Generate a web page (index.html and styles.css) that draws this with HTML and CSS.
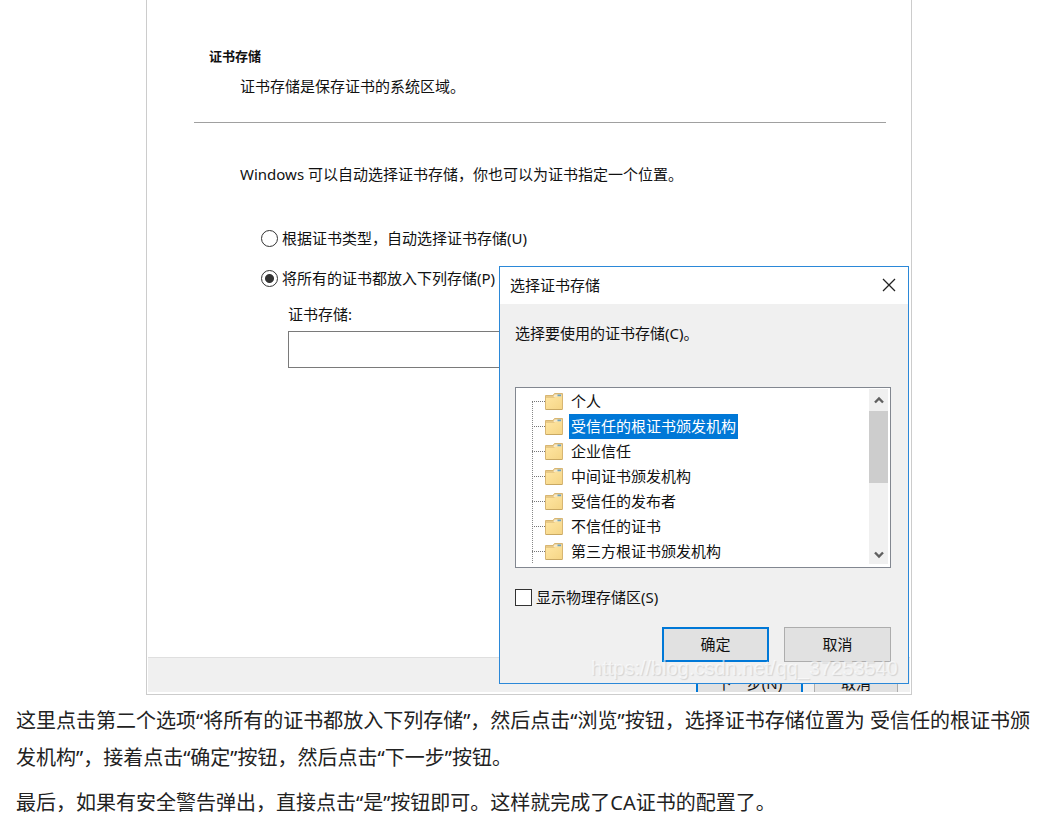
FILE: index.html
```html
<!DOCTYPE html>
<html lang="zh-CN">
<head>
    <meta charset="UTF-8">
    <meta name="viewport" content="width=device-width, initial-scale=1.0">
    <title>CA证书配置</title>
    <link rel="stylesheet" href="styles.css">
</head>
<body>
    <svg class="sprite" aria-hidden="true">
        <defs>
            <linearGradient id="folderFill" x1="0" y1="0" x2="1" y2="1">
                <stop offset="0" stop-color="#ffe6a2"/>
                <stop offset="1" stop-color="#f5d586"/>
            </linearGradient>
        </defs>
        <symbol id="folder" viewBox="0 0 18 17">
            <path d="M.5 16V2.500H8L9.500.5h8V16z" fill="#e8c987" stroke="#d8b672"/>
            <path d="M9.500 1.500h7V4h-8z" fill="#f4ead0"/>
            <path d="M12.500 1.500h3.500v2h-3.500z" fill="#6fa3bd"/>
            <path d="M1 16V5h8l1.500-1.500H17V16z" fill="url(#folderFill)"/>
            <path d="M.5 16.500h17" stroke="#c9a862"/>
        </symbol>
    </svg>

    <article class="article">
        <figure class="wizard">
            <div class="wizard-body">
                <h2>证书存储</h2>
                <p class="subtitle">证书存储是保存证书的系统区域。</p>
                <hr>
                <p class="intro">Windows 可以自动选择证书存储，你也可以为证书指定一个位置。</p>
                <div class="options">
                    <label class="choice"><input type="radio" name="store">根据证书类型，自动选择证书存储(U)</label>
                    <label class="choice"><input type="radio" name="store" checked>将所有的证书都放入下列存储(P)</label>
                    <div class="store-field">
                        <label for="storeName">证书存储:</label>
                        <input type="text" id="storeName">
                    </div>
                </div>
            </div>
            <div class="wizard-footer">
                <button type="button" class="btn btn-default">下一步(N)</button>
                <button type="button" class="btn btn-small">取消</button>
            </div>

            <section class="dialog">
                <header class="dialog-title">
                    <h3>选择证书存储</h3>
                    <button type="button" class="close" aria-label="关闭">
                        <svg width="14" height="14" viewBox="0 0 14 14"><path d="M1 1l12 12M13 1L1 13" stroke="#222" stroke-width="1.300"/></svg>
                    </button>
                </header>
                <div class="dialog-body">
                    <p>选择要使用的证书存储(C)。</p>
                    <div class="tree">
                        <ul>
                            <li><svg><use href="#folder"/></svg><span>个人</span></li>
                            <li class="selected"><svg><use href="#folder"/></svg><span>受信任的根证书颁发机构</span></li>
                            <li><svg><use href="#folder"/></svg><span>企业信任</span></li>
                            <li><svg><use href="#folder"/></svg><span>中间证书颁发机构</span></li>
                            <li><svg><use href="#folder"/></svg><span>受信任的发布者</span></li>
                            <li><svg><use href="#folder"/></svg><span>不信任的证书</span></li>
                            <li><svg><use href="#folder"/></svg><span>第三方根证书颁发机构</span></li>
                        </ul>
                        <div class="scrollbar">
                            <svg width="10" height="8" viewBox="0 0 10 8"><path d="M1 6.500L5 2.500l4 4" fill="none" stroke="#606060" stroke-width="2.400"/></svg>
                            <div class="thumb"></div>
                            <svg width="10" height="8" viewBox="0 0 10 8"><path d="M1 1.500l4 4 4-4" fill="none" stroke="#606060" stroke-width="2.400"/></svg>
                        </div>
                    </div>
                    <label class="choice"><input type="checkbox">显示物理存储区(S)</label>
                    <div class="actions">
                        <button type="button" class="btn btn-default">确定</button>
                        <button type="button" class="btn">取消</button>
                    </div>
                </div>
            </section>
            <span class="watermark">https://blog.csdn.net/qq_37253540</span>
        </figure>

        <p>这里点击第二个选项“将所有的证书都放入下列存储”，然后点击“浏览”按钮，选择证书存储位置为 受信任的根证书颁发机构”，接着点击“确定”按钮，然后点击“下一步”按钮。</p>
        <p>最后，如果有安全警告弹出，直接点击“是”按钮即可。这样就完成了CA证书的配置了。</p>
    </article>
</body>
</html>
```
FILE: styles.css
```css
* {
    margin: 0;
    padding: 0;
    box-sizing: border-box;
}

body {
    font-family: "Noto Sans", "Noto Sans CJK SC", sans-serif;
    background: #fff;
    color: #222;
}

button,
input {
    font: inherit;
    color: inherit;
}

.sprite {
    position: absolute;
    width: 0;
    height: 0;
}

.article {
    padding-left: 16px;
}

.article > p {
    font-size: 20px;
    line-height: 37px;
    margin-bottom: 8px;
}

/* certificate wizard */
.wizard {
    position: relative;
    margin: 0 127px 7px 130px;
    padding: 0 1px 2px;
    border: 1px solid #ccc;
    border-top: none;
    font-size: 15px;
    line-height: 20px;
    color: #111;
}

.wizard-body {
    padding: 46px 24px 289px 46px;
}

.wizard h2 {
    margin-left: 15px;
    font-size: 13px;
    line-height: 20px;
}

.subtitle {
    margin: 10px 0 26px 46px;
}

.wizard hr {
    border: none;
    border-top: 1px solid #a0a0a0;
}

.intro {
    margin: 41px 0 44px 46px;
}

.options {
    display: flex;
    flex-direction: column;
    align-items: flex-start;
    gap: 20px;
    margin-left: 67px;
}

.choice {
    display: flex;
    align-items: center;
    gap: 4px;
}

.choice input {
    appearance: none;
    width: 17px;
    height: 17px;
    border: 1px solid #333;
    background: #fff;
}

.choice input[type="radio"] {
    border-radius: 50%;
}

.choice input[type="radio"]:checked {
    background: radial-gradient(circle, #333 4px, #fff 5px);
}

.store-field {
    display: flex;
    flex-direction: column;
    gap: 7px;
    width: 75%;
    margin: -4px 0 0 27px;
}

.store-field input {
    height: 37px;
    padding: 0 8px;
    border: 1px solid #7a7a7a;
}

.wizard-footer {
    display: flex;
    justify-content: flex-end;
    gap: 11px;
    height: 35px;
    padding: 8px 12px 0;
    border-top: 1px solid #dfdfdf;
    background: #f0f0f0;
    overflow: hidden;
}

.btn {
    width: 107px;
    height: 35px;
    flex: none;
    padding-bottom: 2px;
    border: 1px solid #adadad;
    background: #e1e1e1;
}

.btn-default {
    border: 2px solid #0078d7;
}

.btn-small {
    width: 84px;
}

/* store picker */
.dialog {
    position: absolute;
    right: 2px;
    bottom: 10px;
    width: 410px;
    border: 1px solid #2b88d8;
    background: #f0f0f0;
}

.dialog-title {
    display: flex;
    align-items: center;
    justify-content: space-between;
    height: 37px;
    padding: 0 12px 2px 10px;
    background: #fff;
}

.dialog-title h3 {
    font-size: 15px;
    font-weight: normal;
}

.close {
    display: flex;
    border: none;
    background: none;
}

.dialog-body {
    padding: 19px 17px 21px 15px;
}

.tree {
    display: flex;
    justify-content: space-between;
    margin: 44px 0 19px;
    padding: 1px 2px 3px 0;
    border: 1px solid #828790;
    background: #fff;
}

.tree ul {
    flex: 1;
    margin-left: 16px;
    list-style: none;
    background: repeating-linear-gradient(#888 0 1px, #fff 1px 2px) 0 13px / 1px 100% no-repeat;
}

.tree li {
    display: flex;
    align-items: center;
    height: 25px;
}

.tree li::before {
    content: "";
    width: 13px;
    border-top: 1px dotted #777;
}

.tree li svg {
    width: 18px;
    height: 17px;
    margin-right: 6px;
}

.tree li span {
    padding: 0 2px;
    line-height: 25px;
}

.tree .selected span {
    background: #0078d7;
    color: #fff;
}

.scrollbar {
    display: flex;
    flex-direction: column;
    align-items: center;
    width: 19px;
    padding: 7px 0 5px;
    background: #f0f0f0;
}

.scrollbar .thumb {
    width: 100%;
    height: 72px;
    margin: 7px 0 auto;
    background: #cdcdcd;
}

.actions {
    display: flex;
    justify-content: flex-end;
    gap: 15px;
    margin-top: 20px;
}

.watermark {
    position: absolute;
    right: 13px;
    bottom: 14px;
    font-family: "Liberation Sans", Arial, sans-serif;
    font-size: 20px;
    line-height: 24px;
    color: rgba(255, 255, 255, 0.6);
    text-shadow: 1px 1px 1px rgba(0, 0, 0, 0.12);
}
```
